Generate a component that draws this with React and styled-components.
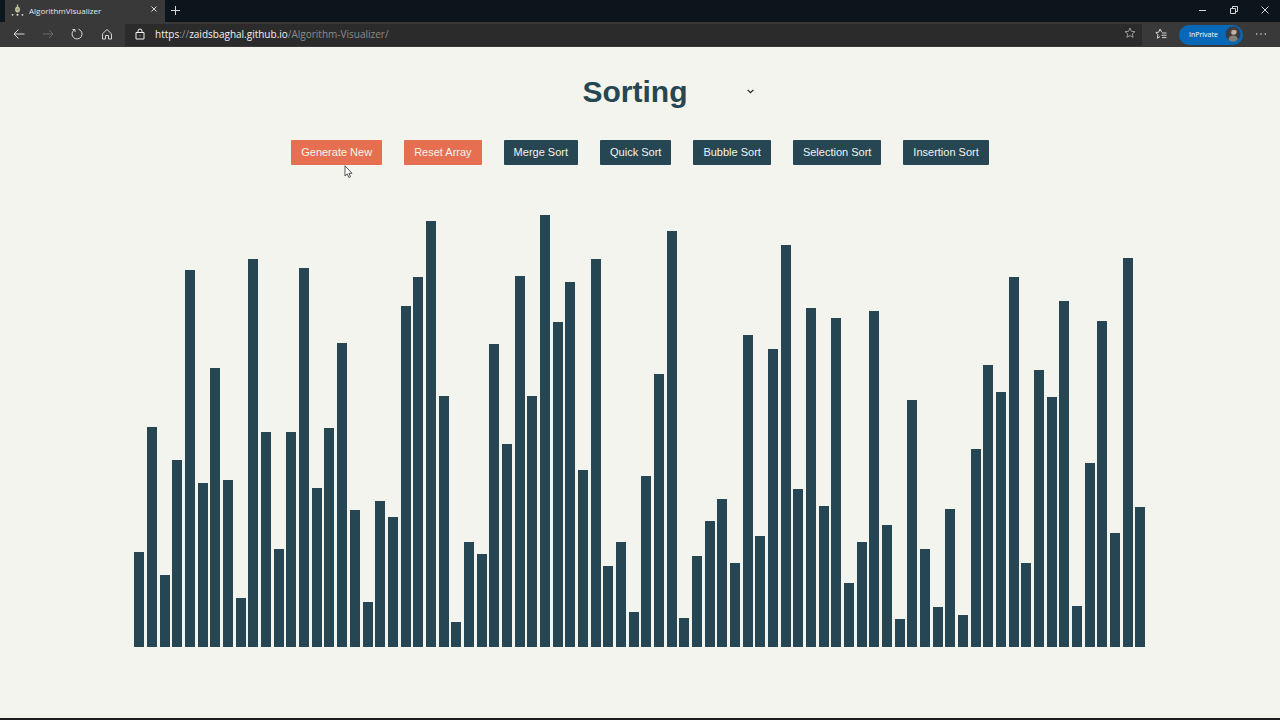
import React, { useState } from "react";
import styled, { createGlobalStyle } from "styled-components";

const GlobalStyle = createGlobalStyle`
  * {
    box-sizing: border-box;
  }
  body {
    margin: 0;
    background: #f3f4ed;
  }
`;

// *********** BROWSER WINDOW STYLING ***********

const Window = styled.div`
  display: flex;
  flex-direction: column;
  min-height: 100vh;
  background: #f3f4ed;
  border-bottom: 2px solid #1d1b1c;
  font-family: "Liberation Sans", Arial, sans-serif;
`;

const TabStrip = styled.div`
  display: flex;
  align-items: center;
  height: 22px;
  padding-left: 5px;
  background: #0c151b;
  color: #e6e6e6;
  font-family: "Open Sans", "Noto Sans", sans-serif;
`;

const Tab = styled.div`
  display: flex;
  align-items: center;
  width: 160px;
  height: 22px;
  padding: 0 6px 2px;
  gap: 5px;
  background: #3a393a;
  font-size: 8px;
`;

const TabTitle = styled.span`
  flex: 1;
`;

const IconButton = styled.button`
  display: flex;
  align-items: center;
  justify-content: center;
  width: ${props => props.$width || 14}px;
  height: 20px;
  padding: 0 0 2px;
  border: none;
  background: none;
  color: ${props => props.$color || "#d6d6d6"};
`;

const WindowButtons = styled.div`
  display: flex;
  margin-left: auto;
`;

const Toolbar = styled.div`
  display: flex;
  align-items: center;
  height: 25px;
  padding: 0 4px;
  background: #3a393a;
  font-family: "Open Sans", "Noto Sans", sans-serif;
`;

const AddressBar = styled.div`
  display: flex;
  align-items: center;
  flex: 1;
  height: 22px;
  margin: 0 4px;
  padding: 0 5px 1px 9px;
  background: #2c2b2b;
  color: #f2f2f2;
  font-size: 10px;
`;

const Host = styled.label`
  margin-left: 9px;
`;

const Muted = styled.span`
  color: #8b8b8b;
`;

const PathInput = styled.input`
  flex: 1;
  min-width: 0;
  padding: 0;
  border: none;
  outline: none;
  background: none;
  color: #8b8b8b;
  font: inherit;
`;

const Profile = styled.button`
  display: flex;
  align-items: center;
  justify-content: space-between;
  width: 64px;
  height: 20px;
  margin: 0 3px;
  padding: 0 2px 1px 10px;
  border: none;
  border-radius: 10px;
  background: #0868b8;
  color: white;
  font-family: inherit;
  font-size: 7px;
`;

// *********** VISUALIZER STYLING ***********

const Main = styled.main`
  display: flex;
  flex-direction: column;
  align-items: center;
  flex: 1;
  padding: 23px 16px;
`;

const ModeWrapper = styled.div`
  display: grid;
  align-items: center;
  width: 234px;

  > * {
    grid-area: 1 / 1;
  }
  > svg {
    justify-self: end;
    margin-right: 3px;
    pointer-events: none;
  }
`;

const ModeSelect = styled.select`
  width: 100%;
  height: 42px;
  padding: 0 10px 0 0;
  border: none;
  outline: none;
  appearance: none;
  background: transparent;
  color: #264653;
  font-family: inherit;
  font-size: 30px;
  font-weight: bold;
  text-align: center;
  text-align-last: center;
`;

const Controls = styled.div`
  display: flex;
  flex-wrap: wrap;
  justify-content: center;
  gap: 22px;
  margin-top: 28px;
`;

const ControlSlot = styled.div`
  position: relative;
`;

const ControlButton = styled.button`
  height: 25px;
  padding: 0 10px 2px;
  border: none;
  border-radius: 1px;
  background: ${props => (props.$accent ? "#e76f51" : "#264653")};
  color: #f3f4ed;
  font-family: inherit;
  font-size: 11px;
  white-space: nowrap;
`;

const Pointer = styled.svg`
  position: absolute;
  top: 25px;
  left: 53px;
  pointer-events: none;
`;

const Bars = styled.div`
  display: flex;
  align-items: flex-end;
  justify-content: space-between;
  width: 79vw;
  margin-top: 50px;
`;

const Bar = styled.div`
  width: 10px;
  background: #264653;
`;

// *********** ICONS ***********

const Icon = ({ size = 12, children, stroke = 1, box = 12 }) => (
  <svg
    width={size}
    height={size}
    viewBox={`0 0 ${box} ${box}`}
    fill="none"
    stroke="currentColor"
    strokeWidth={stroke}
    aria-hidden="true"
  >
    {children}
  </svg>
);

const Favicon = () => (
  <svg width="13" height="12" viewBox="0 0 13 12" aria-hidden="true">
    <path d="M6.5 0.5v4" stroke="#a9b08c" strokeWidth="1.4" />
    <ellipse cx="6.5" cy="5.6" rx="2.4" ry="2.9" fill="#c9c7a2" />
    <circle cx="6.5" cy="5.6" r="1" fill="#7d8768" />
    <circle cx="1.6" cy="10.8" r="0.9" fill="#e8e8e0" />
    <circle cx="6.5" cy="10.8" r="1" fill="#e8e8e0" />
    <circle cx="11.4" cy="10.8" r="0.9" fill="#e8e8e0" />
  </svg>
);

const Avatar = () => (
  <svg width="16" height="16" viewBox="0 0 16 16" aria-hidden="true">
    <circle cx="8" cy="8" r="7.5" fill="#3b3a40" />
    <path d="M3.5 13.9c0-3 2-4.4 4.8-4.4s4.4 1.5 4.4 4.3a7.5 7.5 0 0 1-9.2 0.1z" fill="#86807d" />
    <circle cx="8.6" cy="5.8" r="3" fill="#c3b3a7" />
    <path d="M5.2 6c-0.3-3 1.5-4.3 3.6-4.2 2 0.1 3 1.3 3 2.8-2-1-4.5-0.8-5.2 0.2-0.3 1-0.4 2.5-0.4 3.6z" fill="#4b403c" />
  </svg>
);

const values = [
  95, 220, 72, 187, 377, 164, 279, 167, 49, 388, 215, 98, 215, 379, 159, 219,
  304, 137, 45, 146, 130, 341, 370, 426, 251, 25, 105, 93, 303, 203, 371, 251,
  432, 325, 365, 177, 388, 81, 105, 35, 171, 273, 416, 29, 91, 126, 148, 84,
  312, 111, 298, 402, 158, 339, 141, 329, 64, 105, 336, 122, 28, 247, 98, 40,
  138, 32, 198, 282, 255, 370, 84, 277, 250, 346, 41, 184, 326, 114, 389, 140
];

const sorts = ["Merge Sort", "Quick Sort", "Bubble Sort", "Selection Sort", "Insertion Sort"];

const BrowserChrome = () => {
  const [path, setPath] = useState("/Algorithm-Visualizer/");

  return (
    <header>
      <TabStrip>
        <Tab>
          <Favicon />
          <TabTitle>AlgorithmVisualizer</TabTitle>
          <IconButton $width={11} aria-label="Close tab">
            <Icon size={6} box={6}>
              <path d="M0.5 0.5l5 5M5.5 0.5l-5 5" />
            </Icon>
          </IconButton>
        </Tab>
        <IconButton $width={20} aria-label="New tab">
          <Icon size={9} box={9}>
            <path d="M4.5 0v9M0 4.5h9" />
          </Icon>
        </IconButton>
        <WindowButtons>
          <IconButton $width={31} aria-label="Minimize">
            <Icon size={7} box={7}>
              <path d="M0 3.5h7" />
            </Icon>
          </IconButton>
          <IconButton $width={31} aria-label="Restore">
            <Icon size={8} box={8}>
              <path d="M0.5 2.5h5v5h-5zM2.5 2.5v-2h5v5h-2" />
            </Icon>
          </IconButton>
          <IconButton $width={31} aria-label="Close">
            <Icon size={8} box={8}>
              <path d="M0.5 0.5l7 7M7.5 0.5l-7 7" />
            </Icon>
          </IconButton>
        </WindowButtons>
      </TabStrip>

      <Toolbar>
        <IconButton $width={29} aria-label="Back">
          <Icon>
            <path d="M11.5 6H1M5.5 1.5L1 6l4.5 4.5" />
          </Icon>
        </IconButton>
        <IconButton $width={29} $color="#696969" aria-label="Forward">
          <Icon>
            <path d="M1 6h10M7 2l4 4-4 4" />
          </Icon>
        </IconButton>
        <IconButton $width={30} aria-label="Refresh">
          <Icon>
            <path d="M7.5 1.2A5 5 0 1 1 3 2M1.5 1.5h2.5v2.5" />
          </Icon>
        </IconButton>
        <IconButton $width={29} aria-label="Home">
          <Icon>
            <path d="M1.5 5.8L6 1.5l4.5 4.3v5.2h-3V7.5h-3V11h-3z" />
          </Icon>
        </IconButton>
        <AddressBar>
          <Icon>
            <path d="M2 4.5h8v6.5H2zM4 4.5V3a2 2 0 0 1 4 0v1.5" />
            <circle cx="6" cy="7.7" r="0.5" fill="currentColor" stroke="none" />
          </Icon>
          <Host htmlFor="address">
            https<Muted>://</Muted>zaidsbaghal.github.io
          </Host>
          <PathInput id="address" value={path} onChange={e => setPath(e.target.value)} />
          <IconButton $color="#9a9a9a" aria-label="Add to favorites">
            <Icon>
              <path d="M6 1l1.4 3.3 3.6 0.3-2.7 2.3 0.8 3.5L6 8.5l-3.1 1.9 0.8-3.5L1 4.6l3.6-0.3z" />
            </Icon>
          </IconButton>
        </AddressBar>
        <IconButton $width={30} aria-label="Favorites">
          <Icon>
            <path d="M6.8 4.3L5 1 3.7 4.2 0.8 4.5l2.2 2.2-0.7 3.5L5 8.6M7 5h4.5M6.5 7.3h5M7 9.6h4.5" />
          </Icon>
        </IconButton>
        <Profile>
          InPrivate
          <Avatar />
        </Profile>
        <IconButton $width={30} aria-label="Settings and more">
          <svg width="12" height="12" viewBox="0 0 12 12" fill="currentColor">
            <circle cx="1.7" cy="6" r="0.8" />
            <circle cx="6" cy="6" r="0.8" />
            <circle cx="10.3" cy="6" r="0.8" />
          </svg>
        </IconButton>
      </Toolbar>
    </header>
  );
};

const App = () => {
  const [mode, setMode] = useState("Sorting");

  return (
    <Window>
      <GlobalStyle />
      <BrowserChrome />
      <Main>
        <ModeWrapper>
          <ModeSelect aria-label="Mode" value={mode} onChange={e => setMode(e.target.value)}>
            <option>Sorting</option>
          </ModeSelect>
          <svg width="7" height="5" viewBox="0 0 7 5" fill="none" stroke="#222" strokeWidth="1.2">
            <path d="M0.6 0.8l2.9 2.9 2.9-2.9" />
          </svg>
        </ModeWrapper>

        <Controls>
          <ControlSlot>
            <ControlButton $accent>Generate New</ControlButton>
            <Pointer width="9" height="14" viewBox="0 0 9 14" aria-hidden="true">
              <path
                d="M1 0.8v10.2l2.3-2.1 1.5 3.6 1.7-0.7-1.5-3.5h3z"
                fill="white"
                stroke="#444"
                strokeWidth="0.9"
              />
            </Pointer>
          </ControlSlot>
          <ControlButton $accent>Reset Array</ControlButton>
          {sorts.map(name => (
            <ControlButton key={name}>{name}</ControlButton>
          ))}
        </Controls>

        <Bars>
          {values.map((value, i) => (
            <Bar key={i} style={{ height: value }} />
          ))}
        </Bars>
      </Main>
    </Window>
  );
};

export default App;
